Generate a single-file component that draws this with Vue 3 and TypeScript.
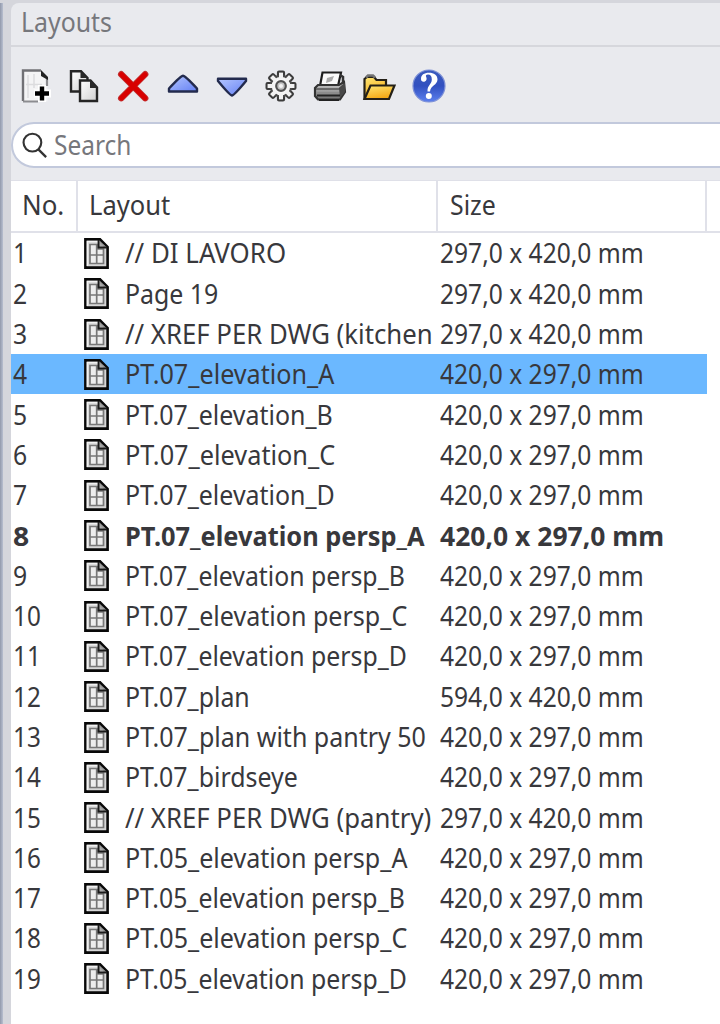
<script setup lang="ts">
import type { Directive } from 'vue'

interface Row {
  no: number
  name: string
  width: number
  size: string
  selected?: boolean
  active?: boolean
}

const A3 = '420,0 x 297,0 mm'
const A3V = '297,0 x 420,0 mm'

const rows: Row[] = [
  { no: 1, name: '// DI LAVORO', width: 161, size: A3V },
  { no: 2, name: 'Page 19', width: 93, size: A3V },
  { no: 3, name: '// XREF PER DWG (kitchen', width: 308, size: A3V },
  { no: 4, name: 'PT.07_elevation_A', width: 209, size: A3, selected: true },
  { no: 5, name: 'PT.07_elevation_B', width: 208, size: A3 },
  { no: 6, name: 'PT.07_elevation_C', width: 210, size: A3 },
  { no: 7, name: 'PT.07_elevation_D', width: 210, size: A3 },
  { no: 8, name: 'PT.07_elevation persp_A', width: 300, size: A3, active: true },
  { no: 9, name: 'PT.07_elevation persp_B', width: 280, size: A3 },
  { no: 10, name: 'PT.07_elevation persp_C', width: 282, size: A3 },
  { no: 11, name: 'PT.07_elevation persp_D', width: 282, size: A3 },
  { no: 12, name: 'PT.07_plan', width: 125, size: '594,0 x 420,0 mm' },
  { no: 13, name: 'PT.07_plan with pantry 50', width: 301, size: A3 },
  { no: 14, name: 'PT.07_birdseye', width: 173, size: A3 },
  { no: 15, name: '// XREF PER DWG (pantry)', width: 306, size: A3V },
  { no: 16, name: 'PT.05_elevation persp_A', width: 282, size: A3 },
  { no: 17, name: 'PT.05_elevation persp_B', width: 280, size: A3 },
  { no: 18, name: 'PT.05_elevation persp_C', width: 282, size: A3 },
  { no: 19, name: 'PT.05_elevation persp_D', width: 282, size: A3 },
]

// Condenses a label horizontally so that it takes the given advance width.
const vFit: Directive<HTMLElement, number> = {
  mounted(el, { value }) {
    el.style.transform = `scaleX(${value / el.offsetWidth})`
  },
}

const teeth = [0, 45, 90, 135, 180, 225, 270, 315]
</script>

<template>
  <div class="window">
    <div class="edge"></div>
    <main class="panel">
      <header class="title"><span v-fit="91" class="t">Layouts</span></header>

      <div class="toolbar">
        <svg class="tool" viewBox="0 0 36 36">
          <defs>
            <linearGradient id="paper" x1="0" y1="0" x2="1" y2="1">
              <stop offset="0" stop-color="#fff" /><stop offset="1" stop-color="#d0d0d0" />
            </linearGradient>
            <linearGradient id="blue" x1="0" y1="0" x2="1" y2="1">
              <stop offset="0" stop-color="#b4c6ff" /><stop offset="1" stop-color="#6480f4" />
            </linearGradient>
            <linearGradient id="gold" x1="0" y1="0" x2="0.4" y2="1">
              <stop offset="0" stop-color="#ffe875" /><stop offset="1" stop-color="#f4a916" />
            </linearGradient>
            <linearGradient id="steel" x1="0" y1="0" x2="0" y2="1">
              <stop offset="0" stop-color="#d0d0d0" /><stop offset="1" stop-color="#6e6e6e" />
            </linearGradient>
            <linearGradient id="help" x1="0" y1="0" x2="0" y2="1">
              <stop offset="0" stop-color="#3a5abc" /><stop offset="0.5" stop-color="#3250c0" /><stop offset="1" stop-color="#5c80ee" />
            </linearGradient>
          </defs>
          <path d="M6 2.500H25L30.500 8V33.500H6Z" fill="#f4f4f5" />
          <path d="M6 33V2.500H24" fill="none" stroke="#717175" stroke-width="2.400" />
          <path d="M6 33.500H21M30 10V18" fill="none" stroke="#8c8c90" stroke-width="2.200" />
          <path d="M11 7V30M17 6V20M9 16.500H25" stroke="#dcdcde" stroke-width="1.500" />
          <path d="M24 2L31 9V12L24 8Z" fill="#222" />
          <path d="M25 17V34M17 25.500H34" stroke="#fff" stroke-width="8" />
          <path d="M25 18.500V32.500M18 25.500H32" stroke="#000" stroke-width="4.400" />
        </svg>
        <svg class="tool" viewBox="0 0 36 36">
          <path d="M5 3.200H15L21.500 10V23.500H5Z" fill="url(#paper)" stroke="#252525" stroke-width="2.400" />
          <path d="M14.500 3V10H22Z" fill="#292929" />
          <path d="M14 12.500H24.500L31 19.500V33H14Z" fill="url(#paper)" stroke="#252525" stroke-width="2.400" />
          <path d="M24 12V20H32Z" fill="#292929" />
        </svg>
        <svg class="tool" viewBox="0 0 36 36">
          <path d="M6.200 6.200L30.200 30.200M30.200 6.200L6.200 30.200" stroke="#c03030" stroke-width="6.400" stroke-linecap="round" />
          <path d="M6.500 6.500L30 30M30 6.500L6.500 30" stroke="#d80000" stroke-width="4.800" stroke-linecap="round" />
        </svg>
        <svg class="tool" viewBox="0 0 36 36">
          <path d="M18 7.800Q20 7.800 32 20.500V23.500H4V20.500Q16 7.800 18 7.800Z" fill="url(#blue)" stroke="#232b4e" stroke-width="2.400" stroke-linejoin="round" />
        </svg>
        <svg class="tool" viewBox="0 0 36 36">
          <path d="M4 10.800H32V13Q20 27.500 18 27.500Q16 27.500 4 13Z" fill="url(#blue)" stroke="#232b4e" stroke-width="2.400" stroke-linejoin="round" />
        </svg>
        <svg class="tool" viewBox="0 0 36 36">
          <g v-for="a in teeth" :key="a" :transform="`rotate(${a} 18 18)`">
            <rect x="15" y="3.600" width="6" height="7" rx="1" fill="#eee" stroke="#3c3c3c" stroke-width="2.200" />
          </g>
          <circle cx="18" cy="18" r="10.300" fill="#f6f6f6" stroke="#4b4b4b" stroke-width="2" />
          <g v-for="a in teeth" :key="`c${a}`" :transform="`rotate(${a} 18 18)`">
            <rect x="16" y="4.800" width="4" height="6" fill="#f2f2f2" />
          </g>
          <circle cx="18" cy="18" r="4.800" fill="#c4c4c4" stroke="#515151" stroke-width="2.200" />
          <circle cx="18" cy="18" r="2" fill="#f4f4f4" />
        </svg>
        <svg class="tool" viewBox="0 0 36 36">
          <path d="M8 18L10.500 4.500H29L26 18Z" fill="#fafafa" stroke="#1e1e1e" stroke-width="2.200" />
          <path d="M28 7L31 9V17" fill="none" stroke="#333" stroke-width="2.500" />
          <path d="M15 10L22 8L20 13L14 15Z" fill="#aaa" />
          <path d="M6 17H27L32 14L33 24L28 31.500H6L3 28V20Z" fill="url(#steel)" stroke="#333" stroke-width="2.200" />
          <path d="M4 21H27L32 16" fill="none" stroke="#555" stroke-width="1.500" />
          <path d="M5 24H27V28H6Z" fill="#8b8b8b" />
          <path d="M27 20L33 15V24L28 30Z" fill="#484848" />
          <path d="M5 27.500H28M7 32H27" stroke="#222" stroke-width="2.200" />
        </svg>
        <svg class="tool" viewBox="0 0 36 36">
          <path d="M3.500 31V11L6 9H13L15.500 12H25V17" fill="url(#gold)" stroke="#242017" stroke-width="2.200" />
          <path d="M5 9.500L7 7.500H12L14 9.500" fill="none" stroke="#737373" stroke-width="2.500" />
          <path d="M3.500 31L9.500 17.500H33.500L28 31Z" fill="url(#gold)" stroke="#242017" stroke-width="2.200" />
        </svg>
        <svg class="tool" viewBox="0 0 36 36">
          <circle cx="18" cy="18" r="16" fill="url(#help)" stroke="#7d90d6" stroke-width="1.200" />
          <path d="M10 11C10 7 13 4.800 18 4.800C23 4.800 26.500 7.200 26.500 11.500C26.500 17 19.500 17.500 19 23.500H16.500C16.200 17 20.800 16.500 20.800 11.500C20.800 8.500 19.500 6.600 17 6.600C15 6.600 14.500 7.500 15.200 9C16.500 12 14.500 13.800 12.500 13.800C11 13.800 10 12.800 10 11Z" fill="#fff" />
          <circle cx="17.800" cy="28" r="3" fill="#fff" />
        </svg>
      </div>

      <div class="search">
        <svg class="lens" viewBox="0 0 28 28">
          <circle cx="10.800" cy="11" r="9.200" fill="none" stroke="#333" stroke-width="2.200" />
          <path d="M17 18L25 26" stroke="#333" stroke-width="2.400" />
        </svg>
        <span v-fit="77.500" class="t">Search</span>
      </div>

      <section class="table">
        <div class="head">
          <div class="h no"><span v-fit="42" class="t">No.</span></div>
          <div class="h layout"><span v-fit="81" class="t">Layout</span></div>
          <div class="h size"><span v-fit="46" class="t">Size</span></div>
        </div>
        <div
          v-for="row in rows"
          :key="row.no"
          class="row"
          :class="{ selected: row.selected, active: row.active }"
        >
          <div class="c-no"><span v-fit="row.no > 9 ? 27.500 : row.active ? 16 : 14" class="t">{{ row.no }}</span></div>
          <svg class="page" viewBox="0 0 25 31">
            <path d="M1.400 1.400H16L23.600 9V29.600H1.400Z" fill="#d6d6d6" stroke="#080808" stroke-width="2.600" />
            <path d="M3.400 28V3.400H14" fill="none" stroke="#f2f2f2" stroke-width="1.500" />
            <path d="M6 6.500H14V11H19.500V25.500H6Z" fill="#ededed" stroke="#777" stroke-width="1.700" />
            <path d="M12.700 6V26M5.500 17H20" stroke="#777" stroke-width="1.700" />
            <path d="M14.500 2V9.500H23" fill="#999" stroke="#1a1a1a" stroke-width="1.800" />
            <path d="M16 5L19.500 8.300H16Z" fill="#aaa" />
          </svg>
          <div class="c-name"><span v-fit="row.width" class="t">{{ row.name }}</span></div>
          <div class="c-size"><span v-fit="row.active ? 224 : 204" class="t">{{ row.size }}</span></div>
        </div>
      </section>
    </main>
  </div>
</template>

<style>
body {
  background: #d5d6dc;
}
</style>

<style scoped>
.window {
  display: flex;
  width: 720px;
  height: 1024px;
  box-sizing: border-box;
  padding-top: 3px;
  overflow: hidden;
  background: #d5d6dc;
  color: #38383c;
  font-family: "Noto Sans", "Open Sans", sans-serif;
  font-size: 26.500px;
  line-height: 38px;
}
.edge {
  flex: none;
  width: 3px;
  margin-right: 8px;
  background: linear-gradient(90deg, #9299ab, #b8bfd0);
}
.panel {
  flex: 1;
  min-width: 0;
  display: flex;
  flex-direction: column;
  background: #e9eaee;
  border-top-left-radius: 8px;
}
.t {
  display: inline-block;
  white-space: pre;
  transform-origin: 0 50%;
}
.title {
  box-sizing: border-box;
  height: 44px;
  padding-left: 9.500px;
  border-bottom: 2px solid #d6d7dc;
  color: #76777c;
}
.toolbar {
  display: flex;
  gap: 13.200px;
  height: 75px;
  padding: 21px 0 0 6px;
  box-sizing: border-box;
}
.tool {
  flex: none;
  width: 36px;
  height: 36px;
}
.search {
  display: flex;
  align-items: center;
  box-sizing: border-box;
  height: 46px;
  margin-right: -30px;
  padding-left: 9px;
  background: #fff;
  border: 2px solid #c2c9dc;
  border-radius: 23px;
  color: #76777c;
}
.lens {
  width: 27px;
  height: 27px;
  margin-right: 5px;
}
.table {
  flex: 1;
  margin-top: 12px;
  background: #fff;
}
.head {
  display: flex;
  box-sizing: border-box;
  height: 53.300px;
  border-top: 1px solid #dfe0e8;
  border-bottom: 2px solid #e0e1e9;
  line-height: 49px;
}
.h {
  box-sizing: border-box;
  border-right: 2px solid #e0e1e9;
}
.no {
  width: 67px;
  padding-left: 10.500px;
}
.layout {
  width: 360px;
  padding-left: 11px;
}
.size {
  width: 269px;
  padding-left: 11.500px;
}
.row {
  display: flex;
  align-items: center;
  width: 696px;
  height: 40.300px;
}
.row .t {
  margin-top: -2px;
}
.selected {
  background: #6bb8ff;
}
.active {
  font-weight: 700;
}
.c-no {
  flex: none;
  width: 73px;
  padding-left: 1.500px;
  box-sizing: border-box;
}
.page {
  flex: none;
  width: 25px;
  height: 31px;
}
.c-name {
  flex: none;
  width: 316px;
  margin-left: 15.500px;
  margin-right: -0.500px;
}
.c-size {
  flex: none;
}
</style>
